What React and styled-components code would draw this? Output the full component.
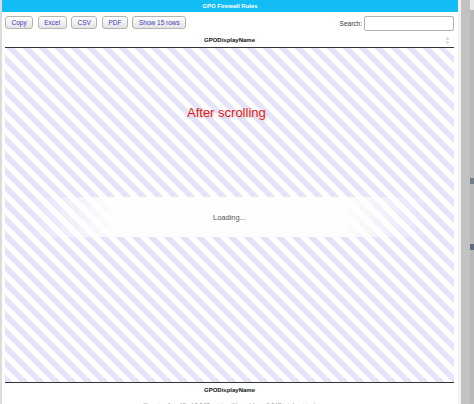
import React from "react";
import styled, { createGlobalStyle } from "styled-components";

const GlobalStyle = createGlobalStyle`
  html, body {
    margin: 0;
    padding: 0;
    background: #ffffff;
    overflow: hidden;
  }
  body {
    font-family: "Liberation Sans", Arial, sans-serif;
  }
`;

const buttons = ["Copy", "Excel", "CSV", "PDF", "Show 15 rows"];

export default function App() {
  return (
    <>
      <GlobalStyle />
      <Page>
        <LeftEdge />
        <Main>
          <TitleBar>GPO Firewall Rules</TitleBar>
          <Content>
            <Toolbar>
              <ButtonGroup>
                {buttons.map(b => (
                  <ToolButton key={b}>{b}</ToolButton>
                ))}
              </ButtonGroup>
              <SearchLabel>
                Search:
                <SearchInput type="text" />
              </SearchLabel>
            </Toolbar>
            <HeadRow>
              <HeadCell>GPODisplayName</HeadCell>
              <SortIcon viewBox="0 0 6 10" width="5" height="9">
                <path d="M3 0.5 L5.5 4 L0.5 4 Z" fill="#d6d6d6" />
                <path d="M3 9.5 L5.5 6 L0.5 6 Z" fill="#d6d6d6" />
              </SortIcon>
            </HeadRow>
            <ScrollBody>
              <Annotation>After scrolling</Annotation>
              <Processing>Loading...</Processing>
            </ScrollBody>
            <FootRow>
              <HeadCell>GPODisplayName</HeadCell>
            </FootRow>
            <Info>Showing 1 to 15 of 2,547 entries (filtered from 2,547 total entries)</Info>
          </Content>
        </Main>
        <Gutter />
        <ScrollTrack />
        <RightEdge />
      </Page>
    </>
  );
}

const Page = styled.div`
  display: flex;
  width: 474px;
  height: 404px;
  overflow: hidden;
`;

const LeftEdge = styled.div`
  width: 2px;
  background: #dcdcdc;
`;

const Main = styled.div`
  width: 456px;
  display: flex;
  flex-direction: column;
  background: #ffffff;
`;

const TitleBar = styled.div`
  height: 12px;
  background: #12bdf6;
  color: #ffffff;
  font-size: 6px;
  font-weight: bold;
  line-height: 12px;
  text-align: center;
`;

const Content = styled.div`
  display: flex;
  flex-direction: column;
  padding: 0 4px 0 3px;
`;

const Toolbar = styled.div`
  display: flex;
  justify-content: space-between;
  align-items: flex-start;
  padding-top: 4px;
  height: 17px;
`;

const ButtonGroup = styled.div`
  display: flex;
  gap: 4.5px;
`;

const ToolButton = styled.button`
  height: 13px;
  padding: 0 5.5px;
  border: 1px solid #b4b4b4;
  border-radius: 3px;
  background: linear-gradient(to bottom, #ffffff 0%, #e4e4e4 100%);
  color: #3c3cb4;
  font-family: "Liberation Sans", Arial, sans-serif;
  font-size: 6.5px;
  line-height: 11px;
  cursor: pointer;
`;

const SearchLabel = styled.label`
  display: flex;
  align-items: center;
  gap: 2px;
  font-size: 6.5px;
  color: #333333;
`;

const SearchInput = styled.input`
  width: 84px;
  height: 13px;
  padding: 0 2px;
  box-sizing: content-box;
  border: 1px solid #b0b0b0;
  border-radius: 2px;
  background: #ffffff;
`;

const HeadRow = styled.div`
  position: relative;
  height: 14px;
  border-bottom: 1px solid #333333;
  display: flex;
  align-items: center;
  justify-content: center;
`;

const HeadCell = styled.div`
  font-size: 6px;
  font-weight: bold;
  color: #111111;
`;

const SortIcon = styled.svg`
  position: absolute;
  right: 4px;
  top: 3px;
`;

const ScrollBody = styled.div`
  position: relative;
  height: 334px;
  background: repeating-linear-gradient(
    45deg,
    #e5e5fa 0px,
    #e5e5fa 5.6px,
    #ffffff 5.6px,
    #ffffff 11.3px
  );
`;

const Annotation = styled.div`
  position: absolute;
  left: 182px;
  top: 57px;
  font-family: "Liberation Sans", Arial, sans-serif;
  font-size: 13px;
  color: #e3101a;
  text-shadow: 0 0 2px #ffffff, 0 0 2px #ffffff, 1px 1px 2px #b0b0b0;
`;

const Processing = styled.div`
  position: absolute;
  left: 30px;
  right: 30px;
  top: 149px;
  height: 40px;
  display: flex;
  align-items: center;
  justify-content: center;
  font-size: 7.5px;
  color: #555555;
  background: linear-gradient(
    to right,
    rgba(255, 255, 255, 0) 0%,
    rgba(255, 255, 255, 0.92) 20%,
    rgba(255, 255, 255, 0.92) 80%,
    rgba(255, 255, 255, 0) 100%
  );
`;

const FootRow = styled.div`
  height: 14px;
  border-top: 1px solid #333333;
  display: flex;
  align-items: center;
  justify-content: center;
`;

const Info = styled.div`
  padding-top: 5px;
  font-size: 6px;
  color: #999999;
  text-align: center;
`;

const Gutter = styled.div`
  width: 3px;
  background: #f2f2f2;
`;

const ScrollTrack = styled.div`
  width: 9px;
  background: #c2c2c2;
`;

const RightEdge = styled.div`
  width: 4px;
  background: linear-gradient(
    to bottom,
    #e8e8e8 0px,
    #e8e8e8 10px,
    #b9b9b9 10px,
    #b9b9b9 178px,
    #6f7f8c 178px,
    #6f7f8c 184px,
    #b9b9b9 184px,
    #b9b9b9 244px,
    #5f6d80 244px,
    #5f6d80 250px,
    #b9b9b9 250px
  );
`;
